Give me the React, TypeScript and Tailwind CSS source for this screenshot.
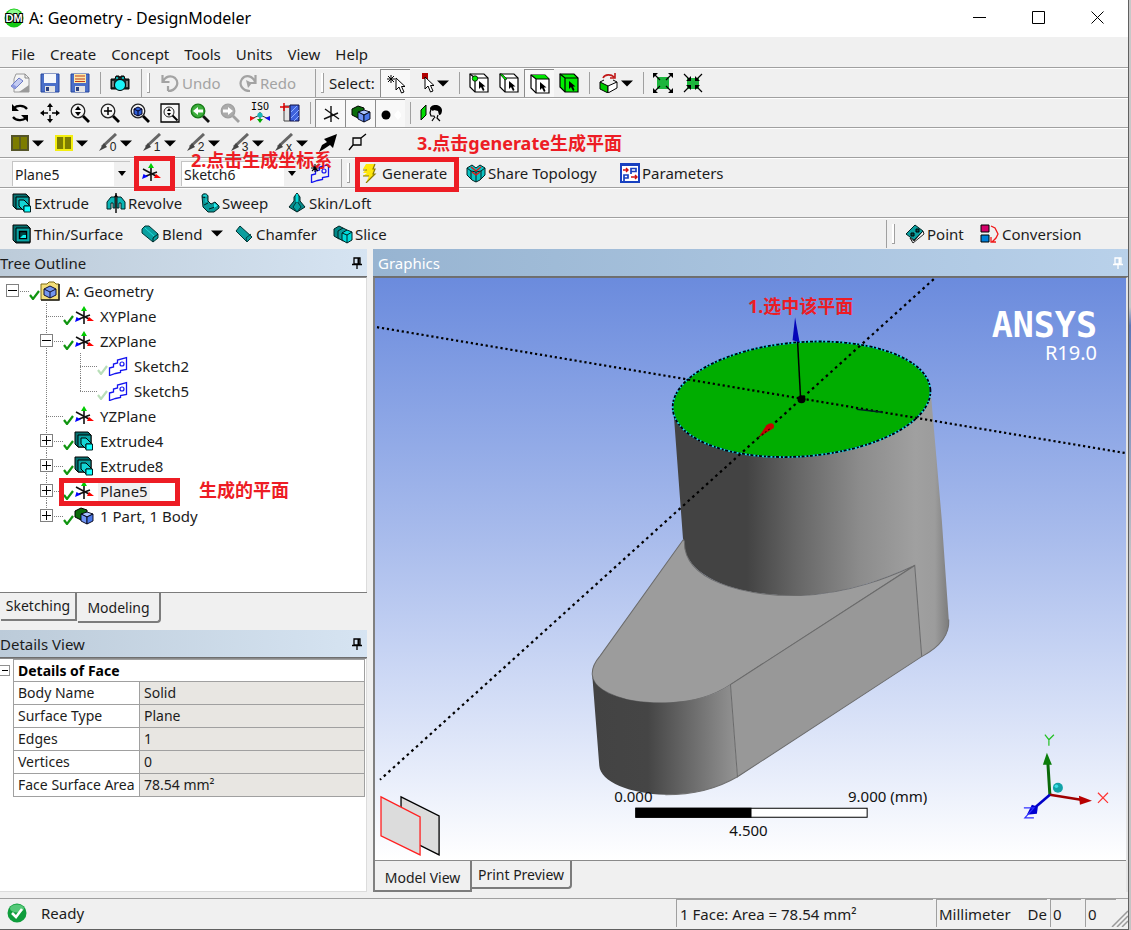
import React from "react";

type Kids = { children?: React.ReactNode };

/* ---------- icon drawings ---------- */

const Ico = ({ children, size = "w-5 h-5", box = "0 0 20 20" }: Kids & { size?: string; box?: string }) => (
  <svg viewBox={box} className={`${size} shrink-0`} fill="none" aria-hidden="true">
    {children}
  </svg>
);

const Drop = () => (
  <svg viewBox="0 0 12 7" className="w-3 h-[7px] shrink-0" aria-hidden="true">
    <path d="M0 0.5h12L6 6.5z" fill="#000" />
  </svg>
);

const Axes = () => (
  <Ico>
    <path d="M10 4v14M2 6l13 7M16 9l-11 4" stroke="#111" strokeWidth="1.6" />
    <path d="M10 0l3 5H7z" fill="#0c0" />
    <path d="M20 15l-7 0 2-4z" fill="#f00" />
    <path d="M1 16l1.5-5L7 13.5z" fill="#00f" />
  </Ico>
);

const Cubes = () => (
  <Ico>
    <path d="M1 5l6-3 6 2v8l-6 2-6-3z" fill="#0a6b0a" stroke="#000" />
    <path d="M7 8l6-2 6 2-6 3z" fill="#a9c3ff" stroke="#001" strokeWidth="0.9" />
    <path d="M7 8v7l6 3V11z" fill="#6f94f5" stroke="#001" strokeWidth="0.9" />
    <path d="M19 8v7l-6 3V11z" fill="#4a78e8" stroke="#001" strokeWidth="0.9" />
  </Ico>
);

const ExtrudeIco = () => (
  <Ico>
    <path d="M1 1h13l3 3v12H4l-3-3z" fill="#067070" stroke="#000" />
    <path d="M4 4h13v12H4z" fill="#0aa5a5" stroke="#000" />
    <path d="M7 7h5l6 6h-6v5l-5-5z" fill="#14d5d5" stroke="#000" />
    <path d="M12 13h6.500v6H12z" fill="#1ff" stroke="#022" />
  </Ico>
);

const ThinIco = () => (
  <Ico>
    <path d="M1 1h14l3 3v15H4l-3-3z" fill="#067070" stroke="#000" />
    <path d="M4 4h14v14H4z" fill="#0aa5a5" stroke="#000" />
    <path d="M7.500 7.500h7v7h-7z" fill="#044" stroke="#000" strokeWidth="1.4" />
    <path d="M8 14l3-3h3v3z" fill="#1ee" />
  </Ico>
);

const RevolveIco = () => (
  <Ico>
    <path d="M1 9l4-5h4v11H7v-5H5v6H1zM19 9l-4-5h-4v11h2v-5h2v6h4z" fill="#0bb5b5" stroke="#022" />
    <path d="M10 0v20" stroke="#000" strokeWidth="1.4" />
    <path d="M8 4l2-3 2 3z" fill="#000" />
  </Ico>
);

const SweepIco = () => (
  <Ico>
    <path d="M2 3c0-3 5-3 6 0v5l3 3 4-2 4 4v2l-5 4H8l-5-5z" fill="#0a9a9a" stroke="#022" />
    <path d="M2 4l5 1M9 16l9-3M4 12l4-2" stroke="#022" />
    <path d="M14 10l4 3-4 2z" fill="#2ee" />
    <path d="M3 3l3-1v7" stroke="#2dd" />
  </Ico>
);

const SkinIco = () => (
  <Ico>
    <path d="M10 0l3 4v4l5 6-8 5-8-5 5-6V4z" fill="#078b8b" stroke="#022" />
    <path d="M10 8l4 6-4 5-4-5z" fill="#06a0a0" stroke="#022" strokeWidth="0.8" />
    <path d="M10 1v8" stroke="#0ee" strokeWidth="1.600" />
  </Ico>
);

const BlendIco = () => (
  <Ico>
    <path d="M2 5l3-3h4l9 8v4l-5 4L2 9z" fill="#0aa0a0" stroke="#033" />
    <path d="M13 18v-4l5-4" stroke="#022" />
    <path d="M5 4l9 8" stroke="#2dd" />
  </Ico>
);

const ChamferIco = () => (
  <Ico>
    <path d="M6 2l12 11-5 5L2 7z" fill="#0c9d9d" stroke="#033" />
    <path d="M13 18l-1-4 5-4" stroke="#044" />
  </Ico>
);

const SliceIco = () => (
  <Ico>
    <path d="M1 5l5-3 4 2v9l-4 2-5-3z" fill="#088" stroke="#022" />
    <path d="M5 7l5-3 4 2v9l-4 2-5-3z" fill="#0a9c9c" stroke="#022" />
    <path d="M9 9l5-3 5 2v8l-5 3-5-3z" fill="#0dd" stroke="#022" />
    <path d="M9 9l5 2 5-3M14 11v8" stroke="#022" />
  </Ico>
);

const Bolt = () => (
  <Ico>
    <path d="M6 1h9l-2 5h2l-2 5h2L6 20l3-7H3l4-3H3l3-4H3z" fill="#ffe70a" />
    <path d="M15 1l-2 5h2l-2 5h2L6 20M3 7h4M3 13h6" stroke="#8a7a00" strokeWidth="1.200" />
  </Ico>
);

const ShareIco = () => (
  <Ico>
    <path d="M1 5l5-3 4 3 4-3 5 3v7l-5 5-4 2-4-2-5-5z" fill="#0bc4c4" stroke="#022" />
    <path d="M1 5l4 3 5 1 5-1 4-3M5 8v8M15 8v8M10 9v10" stroke="#022" />
    <path d="M5 4l5 4 5-4M6 9l4 3 4-3" stroke="#e11" strokeWidth="1.3" />
  </Ico>
);

const ParamIco = () => (
  <Ico>
    <path d="M1 1h18v18H1z" fill="#fff" stroke="#1740c0" strokeWidth="2" />
    <path d="M0 0h20v3H0z" fill="#1740c0" />
    <path d="M3 7h5M6 5l2 2-2 2M11 14h6M15 12l2 2-2 2" stroke="#d01010" strokeWidth="1.4" />
    <path d="M11 11V5.500h5v3h-5M4 18v-6h4v3H4" stroke="#1740c0" strokeWidth="1.700" />
  </Ico>
);

const PointIco = () => (
  <Ico>
    <path d="M5 14l3 5 11-9-1-3-9 10z" fill="#fff" stroke="#222" />
    <path d="M1 10l9-9 8 6-9 9z" fill="#0b9f9f" stroke="#022" />
    <path d="M6 9h3v3H6zM11 5h3v3h-3z" fill="#055" stroke="#000" />
  </Ico>
);

const ConvIco = () => (
  <Ico>
    <path d="M1 1h8v7H1z" fill="#d4006a" stroke="#000" />
    <path d="M1 11h8v7H1z" fill="#007fd8" stroke="#000" />
    <path d="M11 2l4 2 3 6-2 4-4 4M11 13v5h5" stroke="#f01818" strokeWidth="1.3" />
  </Ico>
);

const SketchIco = ({ star = false }: { star?: boolean }) => (
  <Ico>
    <path d="M1.500 12l4-1V8l4-1V4l9-2.500v12l-6 1v2l-5 1-6 2z" stroke="#1414f0" strokeWidth="1.3" fill={star ? "none" : "#fff"} />
    <circle cx="14" cy="8" r="2" stroke="#1414f0" strokeWidth="1.2" />
    {star && <path d="M5 1v8M1 5h8M2 2l6 6M8 2L2 8" stroke="#000" strokeWidth="1.1" />}
  </Ico>
);

const DocIco = () => (
  <Ico>
    <path d="M6 1h9l4 4v14H4V6z" fill="#f3f3f3" stroke="#9a9a9a" />
    <path d="M15 1v4h4" stroke="#888" />
    <path d="M9 19h10v-7z" fill="#9a9a9a" />
    <path d="M1 13l8-8 4 3-8 8z" fill="#c3cbf2" stroke="#6c7ac4" />
    <path d="M1 13l4 3 2-2-4-3z" fill="#8d9ae0" />
  </Ico>
);

const SaveIco = ({ lined = false }: { lined?: boolean }) => (
  <Ico>
    <path d="M1 1h18v18H1z" fill="#4a6fc9" stroke="#26479c" />
    <path d="M4 1h12v9H4z" fill={lined ? "#fde9a8" : "#f5f7fb"} />
    {lined && <path d="M5 3h10M5 6h10M5 8.500h10" stroke="#c03a1c" strokeWidth="1.2" />}
    <path d="M5 13h10v6H5z" fill="#e4e4e4" />
    <path d="M6 14h3v4H6z" fill="#2a3f80" />
  </Ico>
);

const CameraIco = () => (
  <Ico>
    <path d="M1 6h4l1-3h3l1 2 1-2h3l1 3h4v10H1z" fill="#1c2b2b" stroke="#000" />
    <path d="M3 8v6M17 8v6" stroke="#999" strokeWidth="1.500" />
    <circle cx="10" cy="12" r="5.500" fill="#1af4fa" stroke="#000" />
    <path d="M6 5h2M12 5h2" stroke="#0dd" strokeWidth="1.6" />
  </Ico>
);

const Undo = () => (
  <Ico>
    <path d="M2.500 2v7h7M3 9c2-6 8-7 12-4 5 5 1 13-7 13M8 18v-5" stroke="#a3a3a3" strokeWidth="2.200" />
  </Ico>
);
const Redo = () => (
  <Ico>
    <path d="M17.500 2v8h-6M17 9C15 3 8 1 4 6c-4 6 1 12 8 12" stroke="#a3a3a3" strokeWidth="2.200" />
    <path d="M8 7l6 3-4 5z" fill="#a3a3a3" />
  </Ico>
);

const Arrow = ({ x = 0, y = 0, fill = "#fff" }: { x?: number; y?: number; fill?: string }) => (
  <path transform={`translate(${x} ${y})`} d="M0 0v12l3-3 2.500 6 2.500-1L5.500 8.500H9z" fill={fill} stroke="#000" />
);

const StarCursor = () => (
  <Ico>
    <path d="M5 1v8M1 5h8M2 2l6 6M8 2L2 8" stroke="#000" />
    <Arrow x={10} y={4} />
  </Ico>
);
const RedCursor = () => (
  <Ico>
    <path d="M7 0h6v6H7z" fill="#b00000" />
    <Arrow x={10} y={4} />
  </Ico>
);

const CubeSel = ({ mode }: { mode: "point" | "edge" | "face" | "body" }) => (
  <Ico>
    <path d="M1 1h14l4 4v14H6l-5-5z" fill={mode === "body" ? "#0e0" : "#fff"} stroke="#000" strokeWidth="1.2" />
    {mode === "face" && <path d="M1 1h14l4 4H6z" fill="#00e400" />}
    <path d="M1 1l5 4h13M6 5v14" stroke="#000" strokeWidth="1.2" />
    {mode === "point" && <circle cx="6" cy="5.500" r="2.700" fill="#0e0" stroke="#000" strokeWidth="0.8" />}
    {mode === "edge" && <path d="M1 1h2l5 5-2 1z" fill="#0e0" stroke="#000" strokeWidth="0.6" />}
    <path d="M10 8v8l2-2 2 4 1.500-1-1.500-3.500h2.500z" fill="#000" />
  </Ico>
);

const SpinCube = () => (
  <Ico>
    <path d="M1 9l8 4v7l-8-4z" fill="#0c0" stroke="#000" />
    <path d="M9 13l9-4v6l-9 5z" fill="#fff" stroke="#000" />
    <path d="M1 9l4-2M18 9l-4-2" stroke="#000" />
    <path d="M4 5c2-4 8-4 11-1M16 0v5h-5" stroke="#c01818" strokeWidth="1.6" />
  </Ico>
);

const Expand = () => (
  <Ico>
    <path d="M4 4h12v12H4z" fill="#1cb53c" />
    <path d="M1 1l6 6M19 1l-6 6M1 19l6-6M19 19l-6-6" stroke="#000" strokeWidth="1.2" />
    <path d="M0 0h5L0 5zM20 0v5l-5-5zM0 20v-5l5 5zM20 20h-5l5-5z" fill="#000" />
  </Ico>
);
const Contract = () => (
  <Ico>
    <path d="M4 5h12v11H4z" fill="#1cb53c" />
    <path d="M1 1l6 6M19 1l-6 6M1 19l6-6M19 19l-6-6" stroke="#000" strokeWidth="1.2" />
    <path d="M8 8H3l5-5zM12 8V3l5 5zM8 12v5l-5-5zM12 12h5l-5 5z" fill="#000" />
  </Ico>
);

const Spin = () => (
  <Ico>
    <path d="M17 6c-3-4-10-4-13-1M3 14c3 4 10 4 13 1" stroke="#000" strokeWidth="2.2" />
    <path d="M2 1v7h7zM18 19v-7h-7z" fill="#000" />
  </Ico>
);
const Pan = () => (
  <Ico>
    <path d="M10 3v5M10 12v5M3 10h5M12 10h5" stroke="#000" strokeWidth="1.4" />
    <path d="M10 0l3 4H7zM10 20l3-4H7zM0 10l4-3v6zM20 10l-4-3v6z" fill="#000" />
  </Ico>
);
const Lens = ({ children, rim = "#222", handle = "#000", fill = "#f6f6f6" }: Kids & { rim?: string; handle?: string; fill?: string }) => (
  <Ico>
    <path d="M13 13l6 6" stroke={handle} strokeWidth="2.800" />
    <circle cx="8" cy="8" r="6.800" fill={fill} stroke={rim} strokeWidth="1.300" />
    {children}
  </Ico>
);
const BoxLens = () => (
  <Ico>
    <path d="M1 1h18v18H1z" fill="#f6f6f6" stroke="#000" strokeWidth="1.300" />
    <circle cx="9" cy="9" r="5" stroke="#222" />
    <path d="M12.500 12.500l5 5" stroke="#000" strokeWidth="2" />
    <path d="M9 5l2 3H7zM9 13l2-3H7z" fill="#000" />
  </Ico>
);
const IsoIco = () => (
  <Ico size="w-5 h-6" box="0 -4 20 24">
    <text x="10" y="5" textAnchor="middle" fontSize="10" fontFamily="DejaVu Sans Mono" fill="#000">ISO</text>
    <path d="M10 7v9" stroke="#111" />
    <path d="M10 10l-9 4M10 10l9 4" stroke="#333" />
    <path d="M0 16v-5l5 2z" fill="#e11" />
    <path d="M20 16v-5l-5 2z" fill="#11e" />
    <path d="M10 18l-3-4h6z" fill="#0a0" />
    <circle cx="10" cy="10" r="2.600" fill="#18b8b8" />
  </Ico>
);
const SheetIco = () => (
  <Ico>
    <path d="M4 3h6v15H4z" fill="#e4e4e4" stroke="#444" />
    <path d="M10 2h9v16h-9z" fill="#3f62dc" stroke="#114" />
    <path d="M11 9l6-6M11 15l8-8M14 18l5-5" stroke="#8fb0ff" />
    <path d="M4 0v8M0 4h9" stroke="#d00" strokeWidth="1.500" />
  </Ico>
);
const BlackAxes = () => (
  <Ico>
    <path d="M10 2v16M4 5l14 10M17 9L3 15" stroke="#111" strokeWidth="1.400" />
  </Ico>
);
const DotIco = () => (
  <Ico>
    <circle cx="5" cy="11" r="4.500" fill="#000" />
    <path d="M17 6l4 5-4 5-4-5z" fill="#fff" />
  </Ico>
);
const LookAt = () => (
  <Ico size="w-6 h-5" box="0 0 24 20">
    <path d="M3 7l5-5v10l-5 5z" fill="#0d0" stroke="#000" />
    <path d="M12 6c0-5 11-6 12 1 0 3-1 5-3 5l-1-4-4-1-1 1z" fill="#000" />
    <path d="M13 6l-1 4 1 3h3l1 2M20 12l-1 3 3 3M16 15l-2 3" stroke="#000" strokeWidth="1.200" />
  </Ico>
);
const Swatch = ({ stroke }: { stroke: string }) => (
  <Ico>
    <path d="M2 3h16v14H2z" fill="#7d7d00" stroke={stroke} strokeWidth="2" />
    <path d="M10 3v14" stroke={stroke} strokeWidth="1.500" />
  </Ico>
);
const EdgeIco = ({ label }: { label: string }) => (
  <Ico>
    <path d="M4 14L18 1" stroke="#666" strokeWidth="3" />
    <path d="M1 18l5-8 3 4z" fill="#444" />
    <text x="15" y="18" textAnchor="middle" fontSize="12" fontFamily="Liberation Sans" fill="#222">{label}</text>
  </Ico>
);
const BigArrow = () => (
  <Ico>
    <path d="M19 1l-4 14-3-3-6 4-5 3 3-7 5-3-3-3z" fill="#000" />
  </Ico>
);
const Vertex = () => (
  <Ico>
    <path d="M5 5h8v7H5zM13 5l5-4M5 12l-4 5" stroke="#000" strokeWidth="1.300" />
  </Ico>
);
const Check = ({ faded }: { faded?: boolean }) => (
  <svg viewBox="0 0 11 10" className="w-[11px] h-2.5 mt-2 shrink-0" fill="none" aria-hidden="true">
    <path d="M1 5l3 4 6-8" stroke={faded ? "#b9dfb9" : "#109510"} strokeWidth="2.200" />
  </svg>
);
const Folder = () => (
  <Ico>
    <path d="M1 3h6l2-2h5l2 2h3v16H1z" fill="#f3df7a" stroke="#7d6b14" />
    <path d="M1 19h18V3" stroke="#222" strokeWidth="1.500" />
    <path d="M4 8l6-3 6 3v6l-6 3-6-3z" fill="#7396f0" stroke="#113" />
    <path d="M4 8l6 3 6-3M10 11v6" stroke="#113" />
  </Ico>
);
const Pin = ({ color }: { color: string }) => (
  <svg viewBox="0 0 10 12" className="w-2.5 h-3 shrink-0" fill="none" aria-hidden="true">
    <path d="M2 1h6v6H2zM0 7.500h10M5 8v4" stroke={color} strokeWidth="1.300" />
    <path d="M6.500 1v6" stroke={color} strokeWidth="2" />
  </svg>
);

/* ---------- toolbar building blocks ---------- */

const Bar = ({ children, label }: Kids & { label: string }) => (
  <div role="toolbar" aria-label={label} className="relative flex h-[30px] items-center border-t border-b border-t-white border-b-[#a0a0a0] pl-[5px]">
    {children}
  </div>
);
const Sep = () => (
  <span className="flex w-2.5 justify-center">
    <span className="h-[22px] w-px bg-[#a0a0a0]" />
  </span>
);
const Grip = () => (
  <span className="flex w-[18px] shrink-0 items-center gap-[5px] pl-1.5">
    <span className="h-7 w-px bg-[#a0a0a0]" />
    <span className="h-5 w-[3px] border-r border-b border-[#a0a0a0] bg-white" />
  </span>
);
const Btn = ({ children, label, on }: Kids & { label: string; on?: boolean }) => (
  <button
    type="button"
    aria-label={label}
    aria-pressed={on}
    className={`flex h-7 w-[30px] shrink-0 items-center justify-center ${on ? "border-t border-l border-[#8c8c8c] bg-[#f8f8f8]" : ""}`}
  >
    {children}
  </button>
);
const DropBtn = ({ children, label }: Kids & { label: string }) => (
  <button type="button" aria-label={label} className="flex h-7 w-11 shrink-0 items-center gap-0.5 pl-[5px]">
    {children}
    <Drop />
  </button>
);
const TextBtn = ({ icon, children, w, muted }: Kids & { icon: React.ReactNode; w: string; muted?: boolean }) => (
  <button
    type="button"
    disabled={muted}
    className={`flex h-7 shrink-0 items-center gap-0.5 pl-[7px] whitespace-nowrap ${w} ${muted ? "text-[#a3a3a3]" : ""}`}
  >
    {icon}
    {children}
  </button>
);
const Combo = ({ label, value, w }: { label: string; value: string; w: string }) => (
  <label className={`relative flex h-[25px] shrink-0 items-center border-l border-t border-[#c4c4c4] bg-white ${w}`}>
    <select aria-label={label} defaultValue={value} className="h-full w-full appearance-none bg-transparent pt-0.5 pl-0.5 text-sm outline-none">
      <option>{value}</option>
    </select>
    <span className="pointer-events-none absolute top-0 right-0 flex h-full w-4 items-center justify-center bg-[#f0f0f0]">
      <svg viewBox="0 0 8 5" className="h-[5px] w-2" aria-hidden="true">
        <path d="M0 0h8L4 5z" fill="#000" />
      </svg>
    </span>
  </label>
);
const Note = ({ children, at }: Kids & { at: string }) => (
  <span className={`pointer-events-none absolute z-20 text-lg leading-5 font-bold whitespace-nowrap text-[#ed1c24] ${at}`}>{children}</span>
);
const Frame = ({ at }: { at: string }) => <span className={`pointer-events-none absolute z-10 border-[5px] border-[#ed1c24] ${at}`} />;

const PanelHead = ({ title, tone, pin }: { title: string; tone: string; pin: string }) => (
  <div className={`flex h-7 shrink-0 items-center justify-between border-b border-[#6e6e6e] pr-[5px] ${tone}`}>
    <h2>{title}</h2>
    <button type="button" aria-label={`Pin ${title}`}>
      <Pin color={pin} />
    </button>
  </div>
);

/* ---------- outline tree ---------- */

type Node = { text: string; depth: number; icon: React.ReactNode; box?: "+" | "-"; last?: boolean; faded?: boolean; picked?: boolean };

const nodes: Node[] = [
  { text: "A: Geometry", depth: 0, icon: <Folder />, box: "-" },
  { text: "XYPlane", depth: 1, icon: <Axes /> },
  { text: "ZXPlane", depth: 1, icon: <Axes />, box: "-" },
  { text: "Sketch2", depth: 2, icon: <SketchIco />, faded: true },
  { text: "Sketch5", depth: 2, icon: <SketchIco />, faded: true, last: true },
  { text: "YZPlane", depth: 1, icon: <Axes /> },
  { text: "Extrude4", depth: 1, icon: <ExtrudeIco />, box: "+" },
  { text: "Extrude8", depth: 1, icon: <ExtrudeIco />, box: "+" },
  { text: "Plane5", depth: 1, icon: <Axes />, box: "+", picked: true },
  { text: "1 Part, 1 Body", depth: 1, icon: <Cubes />, box: "+", last: true },
];

const Branch = ({ n }: { n: Node }) => (
  <span className="relative h-full w-[34px] shrink-0">
    {n.depth > 0 && <span className={`absolute top-0 left-[17px] border-l border-dotted border-[#808080] ${n.last ? "h-1/2" : "h-full"}`} />}
    <span className="absolute top-1/2 right-0 left-[17px] border-t border-dotted border-[#808080]" />
    {n.box && (
      <button type="button" aria-label={n.box === "+" ? "Expand" : "Collapse"} className="absolute top-1.5 left-[11px] h-[13px] w-[13px] border border-[#808080] bg-white">
        <svg viewBox="0 0 11 11" className="block h-[11px] w-[11px]" aria-hidden="true">
          <path d={n.box === "+" ? "M1 5.500h9M5.500 1v9" : "M1 5.500h9"} stroke="#000" />
        </svg>
      </button>
    )}
  </span>
);

const Tree = () => (
  <ul role="tree" className="-ml-[5px]">
    {nodes.map((n) => (
      <li key={n.text} role="treeitem" className="relative flex h-[25px] items-center">
        {n.depth === 1 && <span className="w-[34px] shrink-0" />}
        {n.depth > 1 && (
          <span className="ml-[34px] flex h-full w-[34px] shrink-0 pl-[17px]">
            <span className="border-l border-dotted border-[#808080]" />
          </span>
        )}
        <Branch n={n} />
        <Check faded={n.faded} />
        {n.icon}
        <span className={`ml-1 px-0.5 leading-[22px] ${n.picked ? "bg-[#f0f0f0]" : ""}`}>{n.text}</span>
        {n.picked && (
          <>
            <Frame at="left-16 top-0 h-7 w-[121px]" />
            <Note at="left-[204px] top-0.5">生成的平面</Note>
          </>
        )}
      </li>
    ))}
  </ul>
);

/* ---------- 3D scene ---------- */

const Scene = () => (
  <svg viewBox="375 279 750 581" className="absolute inset-0 h-full w-full" fill="none" role="img" aria-label="Solid model">
    <defs>
      <linearGradient id="cyl" gradientUnits="userSpaceOnUse" x1="672" y1="0" x2="948" y2="0">
        <stop offset="0" stopColor="#434343" />
        <stop offset="0.27" stopColor="#434343" />
        <stop offset="0.45" stopColor="#666" />
        <stop offset="0.68" stopColor="#8c8c8c" />
        <stop offset="0.88" stopColor="#a0a0a0" />
        <stop offset="0.95" stopColor="#9c9c9c" />
        <stop offset="1" stopColor="#7c7c7c" />
      </linearGradient>
      <linearGradient id="foot" gradientUnits="userSpaceOnUse" x1="592" y1="0" x2="738" y2="0">
        <stop offset="0" stopColor="#434343" />
        <stop offset="0.38" stopColor="#454545" />
        <stop offset="0.7" stopColor="#6e6e6e" />
        <stop offset="1" stopColor="#959595" />
      </linearGradient>
    </defs>
    <path d="M673 410L683 545C688 580 740 597 800 596C850 594 890 576 914 566L921 657C938 648 949 636 948 620L941 520L930 393Z" fill="url(#cyl)" />
    <path d="M683 540L600 656C588 670 590 682 602 690C622 702 645 704 670 703C695 702 715 695 730 685L914 566C890 577 850 594 800 596C740 597 683 580 684 542Z" fill="#9c9c9c" stroke="#6b6b6b" />
    <path d="M592 676C594 692 625 704 665 703C695 702 715 695 730 685L737 777C715 790 690 795 665 795C630 794 600 782 599 766Z" fill="url(#foot)" />
    <path d="M730 685L914 566L921 657L737 777Z" fill="#989898" stroke="#6b6b6b" />
    <path d="M921 657C938 648 949 636 948 620" stroke="#707070" />
    <path d="M737 777C715 790 690 795 665 795" stroke="#707070" />
    <ellipse cx="801" cy="400" rx="129" ry="57" transform="rotate(-4.4 801 400)" fill="#00ad00" stroke="#19d3e6" strokeWidth="1.600" />
    <ellipse cx="801" cy="400" rx="129" ry="57" transform="rotate(-4.4 801 400)" stroke="#001" strokeWidth="1.800" strokeDasharray="3 1.500 2 2" />
    <path d="M377 328L1126 454" stroke="#000" strokeWidth="2.200" strokeDasharray="2.200 2.800" />
    <path d="M933 280L380 780" stroke="#000" strokeWidth="2.200" strokeDasharray="2.600 3.600" />
    <path d="M856 410l26 3" stroke="#022" strokeWidth="1.500" />
    <path d="M797 342L800 399" stroke="#000" strokeWidth="1.500" />
    <path d="M794.500 318L792 341l7 2z" fill="#0404b8" />
    <circle cx="801" cy="400" r="4" fill="#000" />
    <path d="M758 438l8-12c4-4 9-2 7 3z" fill="#c80000" />
    <path d="M758 438l12-9" stroke="#300" strokeDasharray="2 2" />

    <path d="M401 797L439 816V855L401 836Z" fill="#dcdcdc" stroke="#000" strokeWidth="1.300" />
    <path d="M381 797L420 817V855L381 836Z" fill="#dcdcdc" stroke="#ff2020" strokeWidth="1.300" />

    <path d="M635.500 808.500h231v9h-231z" fill="#fff" stroke="#000" />
    <path d="M635 808h116v10H635z" fill="#000" />
    <g fontFamily="Noto Sans" fontSize="15" fill="#111" textAnchor="middle">
      <text x="633" y="802">0.000</text>
      <text x="887" y="802">9.000 (mm)</text>
      <text x="748" y="836">4.500</text>
    </g>

    <path d="M1049 795L1047 764" stroke="#0a6a0a" strokeWidth="3" />
    <path d="M1046 753l5 12h-9z" fill="#0b7d0b" />
    <path d="M1049 795L1080 800" stroke="#a00000" strokeWidth="2.600" />
    <path d="M1091 801l-12 4-1-9z" fill="#b80000" />
    <path d="M1049 795L1035 807" stroke="#0000c8" strokeWidth="2.600" />
    <path d="M1026 815l5-10 6 2-1 7z" fill="#0000d0" />
    <circle cx="1057" cy="788" r="5" fill="#12a3a8" />
    <circle cx="1055.500" cy="786.500" r="1.800" fill="#3fe0e6" />
    <path d="M1044 735l4 5 5-5M1048 740v6" stroke="#22c022" strokeWidth="1.200" />
    <path d="M1097 793l10 10M1107 793l-10 10" stroke="#ff3030" strokeWidth="1.200" />
    <path d="M1023 808h10l-9 10h9" stroke="#3030ff" strokeWidth="1.200" />
  </svg>
);

/* ---------- application ---------- */

const details: [string, string][] = [
  ["Body Name", "Solid"],
  ["Surface Type", "Plane"],
  ["Edges", "1"],
  ["Vertices", "0"],
  ["Face Surface Area", "78.54 mm²"],
];

const tabBase = "flex items-center justify-center border-r-2 border-b-2 border-[#7c7c7c] bg-[#f0f0f0] text-sm whitespace-nowrap";
const statusCell = "flex items-center border-t border-l border-[#a0a0a0]";

export default function App() {
  return (
    <div className="flex min-h-screen bg-linear-to-b from-[#c8c8c8] from-33% via-[#5d78b8] via-35% to-[#c4c4c4] to-60% pr-0.5 font-['Noto_Sans','Noto_Sans_CJK_SC',sans-serif] text-[15px] leading-5 text-[#1c1c1c]">
      <div className="flex min-w-0 flex-1 flex-col border-r border-[#606060] bg-[#f0f0f0]">
        <header className="flex h-[37px] items-center bg-white pb-0.5 pl-1">
          <svg viewBox="0 0 20 20" className="h-5 w-5" aria-hidden="true">
            <circle cx="10" cy="10" r="9.500" fill="#14c914" />
            <ellipse cx="10" cy="5" rx="6" ry="3.500" fill="#8dfa8d" />
            <text x="10" y="14" textAnchor="middle" fontSize="11" fontWeight="bold" fontFamily="Liberation Sans" fill="#fff" stroke="#000" strokeWidth="2" paintOrder="stroke">DM</text>
          </svg>
          <h1 className="flex-1 pl-[5px] text-base leading-5 text-black">A: Geometry - DesignModeler</h1>
          <div className="flex">
            {[
              ["Minimize", "M0 6.500h13"],
              ["Maximize", "M0.500 0.500h12v12h-12z"],
              ["Close", "M0.500 0.500l12 12M12.500 0.500l-12 12"],
            ].map(([name, d]) => (
              <button key={name} type="button" aria-label={name} className="flex h-9 w-[59px] items-center justify-center">
                <svg viewBox="0 0 13 13" className="h-[13px] w-[13px]" fill="none" aria-hidden="true">
                  <path d={d} stroke="#000" />
                </svg>
              </button>
            ))}
          </div>
          <span className="w-px" />
        </header>

        <nav aria-label="Main menu" className="flex h-[31px] items-center gap-[15px] border-b border-[#a0a0a0] pt-1 pl-[11px]">
          {["File", "Create", "Concept", "Tools", "Units", "View", "Help"].map((m) => (
            <button key={m} type="button">{m}</button>
          ))}
        </nav>

        <Bar label="File and selection">
          <Btn label="New"><DocIco /></Btn>
          <Btn label="Save"><SaveIco /></Btn>
          <Btn label="Save as"><SaveIco lined /></Btn>
          <Sep />
          <Btn label="Capture image"><CameraIco /></Btn>
          <Grip />
          <TextBtn icon={<Undo />} w="w-[78px]" muted>Undo</TextBtn>
          <TextBtn icon={<Redo />} w="w-[78px]" muted>Redo</TextBtn>
          <Grip />
          <span className="w-[53px] pl-0.5">Select:</span>
          <Btn label="New selection" on><StarCursor /></Btn>
          <DropBtn label="Selection mode"><RedCursor /></DropBtn>
          <Sep />
          <Btn label="Select points"><CubeSel mode="point" /></Btn>
          <Btn label="Select edges"><CubeSel mode="edge" /></Btn>
          <Btn label="Select faces" on><CubeSel mode="face" /></Btn>
          <Btn label="Select bodies"><CubeSel mode="body" /></Btn>
          <Sep />
          <DropBtn label="Extend selection"><SpinCube /></DropBtn>
          <Sep />
          <Btn label="Expand selection"><Expand /></Btn>
          <Btn label="Shrink selection"><Contract /></Btn>
        </Bar>

        <Bar label="View">
          <Btn label="Rotate"><Spin /></Btn>
          <Btn label="Pan"><Pan /></Btn>
          <Btn label="Zoom"><Lens><path d="M8 3l3 4H5zM8 13l3-4H5z" fill="#000" /></Lens></Btn>
          <Btn label="Zoom in"><Lens><path d="M8 4v8M4 8h8" stroke="#000" strokeWidth="1.500" /></Lens></Btn>
          <Btn label="Zoom to fit"><Lens><path d="M4 6l4-2 4 2v5l-4 2-4-2z" fill="#2f5fd8" stroke="#002" /><path d="M4 6l4 2 4-2M8 8v5" stroke="#002" /></Lens></Btn>
          <Btn label="Magnifier"><BoxLens /></Btn>
          <Btn label="Previous view"><Lens rim="#167a16" handle="#111" fill="#3cae3c"><path d="M3 8l5-4v2.500h5v3H8V12z" fill="#fff" /></Lens></Btn>
          <Btn label="Next view"><Lens rim="#a0a0a0" handle="#a0a0a0" fill="#ababab"><path d="M13 8L8 4v2.500H3v3h5V12z" fill="#fff" /></Lens></Btn>
          <Btn label="Isometric view"><IsoIco /></Btn>
          <Btn label="Display plane"><SheetIco /></Btn>
          <Sep />
          <Btn label="Display axes" on><BlackAxes /></Btn>
          <Btn label="Display model" on><Cubes /></Btn>
          <Btn label="Display points" on><DotIco /></Btn>
          <Sep />
          <Btn label="Look at face"><LookAt /></Btn>
        </Bar>

        <Bar label="Edge display">
          <DropBtn label="Face colour"><Swatch stroke="#55552a" /></DropBtn>
          <DropBtn label="Edge colour"><Swatch stroke="#f4ee10" /></DropBtn>
          {["0", "1", "2", "3", "x"].map((k) => (
            <DropBtn key={k} label={`Edge joint ${k}`}><EdgeIco label={k} /></DropBtn>
          ))}
          <Btn label="Edge direction"><BigArrow /></Btn>
          <Btn label="Display vertices"><Vertex /></Btn>
          <Note at="left-[417px] top-1">3.点击generate生成平面</Note>
        </Bar>

        <Bar label="Plane and sketch">
          <span className="w-[7px]" />
          <Combo label="Plane" value="Plane5" w="w-[118px]" />
          <button type="button" aria-label="New plane" className="flex h-7 w-[42px] items-center justify-center"><Axes /></button>
          <span className="w-[9px]" />
          <Combo label="Sketch" value="Sketch6" w="w-[119px]" />
          <span className="w-[5px]" />
          <Btn label="New sketch"><SketchIco star /></Btn>
          <Grip />
          <TextBtn icon={<Bolt />} w="w-[106px]">Generate</TextBtn>
          <TextBtn icon={<ShareIco />} w="w-[154px]">Share Topology</TextBtn>
          <TextBtn icon={<ParamIco />} w="w-[120px]">Parameters</TextBtn>
          <Frame at="left-[134px] -top-[3px] h-[35px] w-[41px]" />
          <Frame at="left-[355px] -top-0.5 h-[35px] w-[104px]" />
          <Note at="left-[191px] -top-[9px]">2.点击生成坐标系</Note>
        </Bar>

        <Bar label="Features">
          <TextBtn icon={<ExtrudeIco />} w="w-[94px]">Extrude</TextBtn>
          <TextBtn icon={<RevolveIco />} w="w-[94px]">Revolve</TextBtn>
          <TextBtn icon={<SweepIco />} w="w-[87px]">Sweep</TextBtn>
          <TextBtn icon={<SkinIco />} w="w-[100px]">Skin/Loft</TextBtn>
        </Bar>

        <div role="toolbar" aria-label="Modify" className="flex h-[31px] items-center border-t border-b border-t-white border-b-[#f0f0f0] pl-[5px]">
          <TextBtn icon={<ThinIco />} w="w-[128px]">Thin/Surface</TextBtn>
          <TextBtn icon={<BlendIco />} w="w-[94px]">Blend<span className="ml-1.5"><Drop /></span></TextBtn>
          <TextBtn icon={<ChamferIco />} w="w-[99px]">Chamfer</TextBtn>
          <TextBtn icon={<SliceIco />} w="w-[80px]">Slice</TextBtn>
          <span className="flex-1" />
          <Grip />
          <TextBtn icon={<PointIco />} w="w-[75px]">Point</TextBtn>
          <TextBtn icon={<ConvIco />} w="w-[155px]">Conversion</TextBtn>
        </div>

        <main className="flex flex-1 gap-1.5 border-b border-[#a0a0a0] pb-1.5">
          <div className="flex w-[367px] shrink-0 flex-col">
            <section className="flex flex-1 flex-col">
              <PanelHead title="Tree Outline" tone="bg-linear-to-r from-[#bccbd9] to-[#d6e4f2]" pin="#000" />
              <div className="flex-1 border-t border-r border-t-[#8a8a8a] border-r-[#dcdcdc] bg-white">
                <Tree />
              </div>
              <div role="tablist" className="flex h-[38px] items-start gap-px border-t border-[#7c7c7c] pl-px">
                <button type="button" role="tab" className={`${tabBase} h-7 w-[76px]`}>Sketching</button>
                <button type="button" role="tab" aria-selected="true" className={`${tabBase} h-[30px] w-[83px] rounded-br-sm pt-0.5`}>Modeling</button>
              </div>
            </section>
            <section className="flex flex-col">
              <PanelHead title="Details View" tone="bg-linear-to-r from-[#bccbd9] to-[#d6e4f2]" pin="#000" />
              <div className="min-h-[234px] border-t border-r border-b border-t-[#8a8a8a] border-r-[#dcdcdc] border-b-[#dcdcdc] bg-white">
                <div className="flex">
                  <button type="button" aria-label="Collapse details" className="mt-1.5 mr-[3px] flex h-[11px] w-2.5 items-center justify-center border border-l-0 border-[#909090]">
                    <span className="h-px w-1.5 bg-black" />
                  </button>
                  <table className="mr-px flex-1 table-fixed border-collapse text-left text-sm leading-5">
                    <colgroup>
                      <col className="w-[126px]" />
                      <col />
                    </colgroup>
                    <thead>
                      <tr className="h-[22px]">
                        <th colSpan={2} className="border border-[#a0a0a0] p-0 pl-1 font-bold text-black">Details of Face</th>
                      </tr>
                    </thead>
                    <tbody>
                      {details.map(([k, v]) => (
                        <tr key={k} className="h-[22px]">
                          <th scope="row" className="border border-[#a0a0a0] p-0 py-px pl-1 font-normal whitespace-nowrap">{k}</th>
                          <td className="border border-[#a0a0a0] bg-[#e8e6e2] p-0 pl-1">{v}</td>
                        </tr>
                      ))}
                    </tbody>
                  </table>
                </div>
              </div>
            </section>
          </div>

          <section className="flex min-w-0 flex-1 flex-col">
            <PanelHead title="Graphics" tone="bg-linear-to-r from-[#97b4d1] to-[#b9d1ea] pl-[5px] text-white" pin="#fff" />
            <div className="flex flex-1 flex-col border-t border-r-2 border-l-2 border-t-[#707070] border-r-[#e4e4e4] border-l-[#808080]">
              <div className="relative min-h-[580px] flex-1 border-b border-[#8a8a8a] bg-linear-to-b from-[#6b8bdd] from-0% via-[#a9bcec] via-45% to-white to-100%">
                <Scene />
                <div className="absolute top-7 right-[29px] text-right text-white">
                  <p className="font-['DejaVu_Sans_Mono'] text-[35px] leading-[38px] font-bold">ANSYS</p>
                  <p className="text-xl leading-[18px]">R19.0</p>
                </div>
                <Note at="left-[373px] top-[18px]">1.选中该平面</Note>
              </div>
              <div role="tablist" className="flex h-[31px] items-start">
                <button type="button" role="tab" aria-selected="true" className={`${tabBase} h-[31px] w-[97px] pt-1`}>Model View</button>
                <button type="button" role="tab" className={`${tabBase} h-7 w-[100px] rounded-br-sm pt-0.5`}>Print Preview</button>
              </div>
            </div>
          </section>
        </main>

        <footer className="flex h-[31px] items-stretch border-b border-b-[#606060] pr-3 pb-0.5">
          <div className="flex flex-1 items-center gap-3.5 pl-[7px]">
            <svg viewBox="0 0 20 20" className="h-5 w-5" fill="none" aria-hidden="true">
              <circle cx="10" cy="10" r="9.500" fill="#0f9d3c" />
              <ellipse cx="10" cy="5.500" rx="7" ry="4" fill="#55c878" />
              <path d="M5 10l4 4 6-8" stroke="#fff" strokeWidth="2.600" />
            </svg>
            Ready
          </div>
          <div className={`${statusCell} mr-[3px] w-[257px] pl-[3px]`}>1 Face: Area = 78.54 mm²</div>
          <div className={`${statusCell} mr-[3px] w-[111px] justify-between pl-0.5`}><span>Millimeter</span><span>De</span></div>
          <div className={`${statusCell} mr-1 w-[31px] pl-0.5`}>0</div>
          <div className={`${statusCell} w-[31px] pl-0.5`}>0</div>
          <svg viewBox="0 0 17 17" className="-mr-3 -ml-[5px] h-[17px] w-[17px] self-end" aria-hidden="true">
            <path d="M1 17L17 1M6 17L17 6M11 17l6-6" stroke="#9a9a9a" strokeWidth="1.500" />
          </svg>
        </footer>
      </div>
    </div>
  );
}
